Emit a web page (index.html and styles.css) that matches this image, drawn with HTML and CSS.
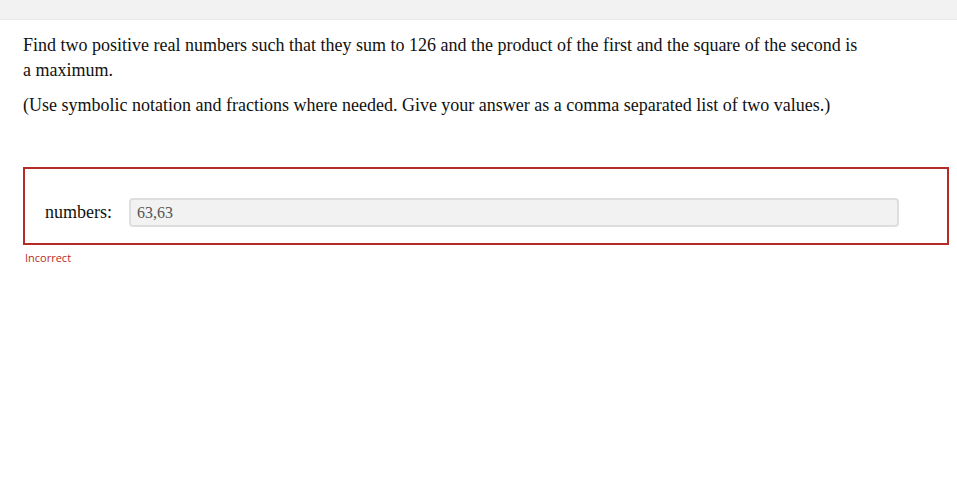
FILE: index.html
```html
<!DOCTYPE html>
<html lang="en">
<head>
  <meta charset="UTF-8" />
  <title>Question</title>
  <link rel="stylesheet" href="styles.css">
</head>
<body>
  <div class="topbar"></div>

  <div class="question">
    <p class="prompt">Find two positive real numbers such that they sum to 126 and the product of the first and the square of the second is a maximum.</p>
    <p class="prompt">(Use symbolic notation and fractions where needed. Give your answer as a comma separated list of two values.)</p>

    <div class="answer-box incorrect">
      <label class="answer-label" for="numbers">numbers:</label>
      <input class="answer-input" id="numbers" type="text" value="63,63" readonly />
    </div>
    <div class="feedback">Incorrect</div>
  </div>
</body>
</html>
```

FILE: styles.css
```css
* {
  margin: 0;
  padding: 0;
  box-sizing: border-box;
}

body {
  font-family: 'Liberation Serif', 'Times New Roman', serif;
  font-size: 18px;
  color: #111;
  background: #fff;
}

.topbar {
  height: 20px;
  background: #f2f2f2;
  border-bottom: 1px solid #e8e8e8;
}

.question {
  padding: 13px 8px 0 23px;
}

.prompt {
  line-height: 25px;
  max-width: 842px;
  margin-bottom: 10px;
}

.answer-box {
  margin-top: 49px;
  border: 2px solid #b52b27;
  padding: 29px 48px 16px 20px;
  display: flex;
  align-items: center;
}

.answer-label {
  width: 84px;
  flex-shrink: 0;
}

.answer-input {
  flex: 1;
  height: 29px;
  padding: 0 6px;
  font-family: 'Liberation Serif', 'Times New Roman', serif;
  font-size: 16px;
  color: #555;
  background: #f2f2f2;
  border: 2px solid #dedede;
  border-radius: 4px;
  outline: none;
}

.feedback {
  margin-top: 5px;
  margin-left: 2px;
  font-family: 'Open Sans', sans-serif;
  font-size: 11px;
  color: #b52b27;
}
```
